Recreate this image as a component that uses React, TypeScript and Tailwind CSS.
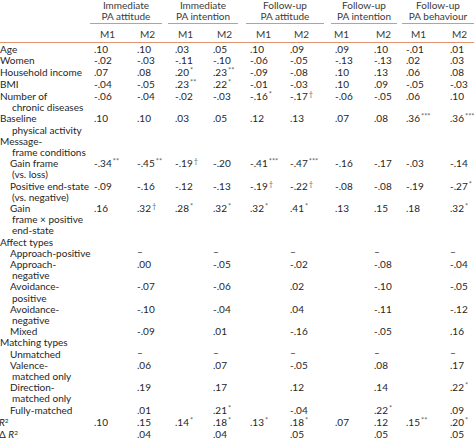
import React from "react";

const GRID =
  "grid grid-cols-[94px_43px_38px_38px_37px_40px_45px_39px_32px_44px_24px]";

type Row = {
  lines: string[];
  sub?: boolean;
  vals?: (string | null)[];
  label?: React.ReactNode;
};

const D = "–";

const rows: Row[] = [
  { lines: ["Age"], vals: [".10", ".10", ".03", ".05", ".10", ".09", ".09", ".10", "-.01", ".01"] },
  { lines: ["Women"], vals: ["-.02", "-.03", "-.11", "-.10", "-.06", "-.05", "-.13", "-.13", ".02", ".03"] },
  { lines: ["Household income"], vals: [".07", ".08", ".20*", ".23**", "-.09", "-.08", ".10", ".13", ".06", ".08"] },
  { lines: ["BMI"], vals: ["-.04", "-.05", ".23**", ".22*", "-.01", "-.03", ".10", ".09", "-.05", "-.03"] },
  { lines: ["Number of", "chronic diseases"], vals: ["-.06", "-.04", "-.02", "-.03", "-.16*", "-.17†", "-.06", "-.05", ".06", ".10"] },
  { lines: ["Baseline", "physical activity"], vals: [".10", ".10", ".03", ".05", ".12", ".13", ".07", ".08", ".36***", ".36***"] },
  { lines: ["Message-", "frame conditions"] },
  { lines: ["Gain frame", "(vs. loss)"], sub: true, vals: ["-.34**", "-.45**", "-.19†", "-.20", "-.41***", "-.47***", "-.16", "-.17", "-.03", "-.14"] },
  { lines: ["Positive end-state", "(vs. negative)"], sub: true, vals: ["-.09", "-.16", "-.12", "-.13", "-.19†", "-.22†", "-.08", "-.08", "-.19", "-.27*"] },
  { lines: ["Gain", "frame × positive", "end-state"], sub: true, vals: [".16", ".32†", ".28*", ".32*", ".32*", ".41*", ".13", ".15", ".18", ".32*"] },
  { lines: ["Affect types"] },
  { lines: ["Approach-positive"], sub: true, vals: [null, D, null, D, null, D, null, D, null, D] },
  { lines: ["Approach-", "negative"], sub: true, vals: [null, ".00", null, "-.05", null, "-.02", null, "-.08", null, "-.04"] },
  { lines: ["Avoidance-", "positive"], sub: true, vals: [null, "-.07", null, "-.06", null, ".02", null, "-.10", null, "-.05"] },
  { lines: ["Avoidance-", "negative"], sub: true, vals: [null, "-.10", null, "-.04", null, ".04", null, "-.11", null, "-.12"] },
  { lines: ["Mixed"], sub: true, vals: [null, "-.09", null, ".01", null, "-.16", null, "-.05", null, ".16"] },
  { lines: ["Matching types"] },
  { lines: ["Unmatched"], sub: true, vals: [null, D, null, D, null, D, null, D, null, D] },
  { lines: ["Valence-", "matched only"], sub: true, vals: [null, ".06", null, ".07", null, "-.05", null, ".08", null, ".17"] },
  { lines: ["Direction-", "matched only"], sub: true, vals: [null, ".19", null, ".17", null, ".12", null, ".14", null, ".22*"] },
  { lines: ["Fully-matched"], sub: true, vals: [null, ".01", null, ".21*", null, "-.04", null, ".22*", null, ".09"] },
  {
    lines: ["R2"],
    label: (
      <span>
        <span className="italic">R</span>
        <span className="relative -top-[3px] text-[6.5px]">2</span>
      </span>
    ),
    vals: [".10", ".15", ".14*", ".18*", ".13*", ".18*", ".07", ".12", ".15**", ".20*"],
  },
  {
    lines: ["dR2"],
    label: (
      <span>
        Δ <span className="italic">R</span>
        <span className="relative -top-[3px] text-[6.5px]">2</span>
      </span>
    ),
    vals: [null, ".04", null, ".04", null, ".05", null, ".05", null, ".05"],
  },
];

function Val({ v }: { v: string | null }) {
  if (v === null) return <div />;
  if (v === D) {
    return <div className="whitespace-nowrap relative -top-[2px]">–</div>;
  }
  const m = v.match(/^([-.0-9]+)([*†]*)$/);
  const body = m ? m[1] : v;
  const sup = m ? m[2] : "";
  return (
    <div className="whitespace-nowrap">
      {body}
      {sup && (
        <span className="relative -top-[3px] ml-[1px] text-[7.5px] text-[#666]">
          {sup}
        </span>
      )}
    </div>
  );
}

const groups = [
  { t: ["Immediate", "PA attitude"], cls: "ml-[-4px] mr-[13px]" },
  { t: ["Immediate", "PA intention"], cls: "ml-[-7px] mr-[12px]" },
  { t: ["Follow-up", "PA attitude"], cls: "ml-[-4px] mr-[11px]" },
  { t: ["Follow-up", "PA intention"], cls: "ml-[-4px] mr-[9px]" },
  { t: ["Follow-up", "PA behaviour"], cls: "ml-[-4px] mr-0" },
];

const mPad = [
  "pl-[6px]",
  "pl-[3px]",
  "pl-[3px]",
  "pl-[4px]",
  "pl-[6px]",
  "pl-[4px]",
  "ml-[-1px]",
  "pl-[2px]",
  "pl-[5px]",
  "pl-[2px]",
];

export default function App() {
  return (
    <div
      className="w-[474px] h-[443px] overflow-hidden bg-white text-[#262626] text-[10px] leading-[11.2px]"
      style={{ fontFamily: "Lato, 'Open Sans', sans-serif" }}
    >
      {/* group header */}
      <div className={GRID}>
        <div />
        {groups.map((g, i) => (
          <div
            key={i}
            className={`col-span-2 ${g.cls} border-b-[1.5px] border-[#e29470] pb-[0.5px] text-center text-[#3a3a3a]`}
          >
            <div>{g.t[0]}</div>
            <div>{g.t[1]}</div>
          </div>
        ))}
      </div>
      {/* M1/M2 */}
      <div className={`${GRID} pt-[5px] pb-[2px] border-b-[1.5px] border-[#e29470] text-[#3a3a3a]`}>
        <div />
        {mPad.map((p, i) => (
          <div key={i} className={p}>
            {i % 2 === 0 ? "M1" : "M2"}
          </div>
        ))}
      </div>
      {/* body */}
      <div className="pt-[1px]">
        {rows.map((r, ri) => (
          <div key={ri} className={GRID}>
            <div className="flex flex-col whitespace-nowrap">
              {r.label ? (
                <div className="ml-[-1px]">{r.label}</div>
              ) : (
                r.lines.map((l, li) => (
                  <div
                    key={li}
                    className={
                      li === 0 ? (r.sub ? "pl-[10px]" : "pl-0") : "pl-[12px]"
                    }
                  >
                    {l}
                  </div>
                ))
              )}
            </div>
            {(r.vals ?? Array(10).fill(null)).map((v, vi) => (
              <Val key={vi} v={v} />
            ))}
          </div>
        ))}
      </div>
    </div>
  );
}
